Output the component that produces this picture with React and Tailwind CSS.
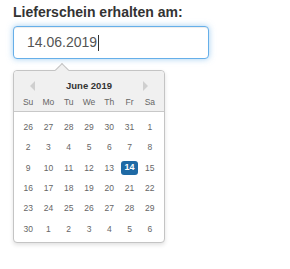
const weekdays = ["Su", "Mo", "Tu", "We", "Th", "Fr", "Sa"];

const weeks = [
  [26, 27, 28, 29, 30, 31, 1],
  [2, 3, 4, 5, 6, 7, 8],
  [9, 10, 11, 12, 13, 14, 15],
  [16, 17, 18, 19, 20, 21, 22],
  [23, 24, 25, 26, 27, 28, 29],
  [30, 1, 2, 3, 4, 5, 6],
];

function DatePicker() {
  return (
    <div className="relative mt-[11px] w-[152px] rounded-[4px] border border-[#c4c4c4] bg-white shadow-[0_2px_4px_rgba(0,0,0,0.12)]">
      {/* caret */}
      <div className="absolute left-[43px] top-[-6px] h-[10px] w-[10px] rotate-45 border-l border-t border-[#c4c4c4] bg-[#f0f0f0]" />

      <div className="relative rounded-t-[4px] border-b border-[#c8c8c8] bg-[#f0f0f0] px-[4px] pt-[6px] pb-[2px]">
        <div className="flex h-[18px] items-center justify-between px-[12px]">
          <span className="h-0 w-0 border-y-[5px] border-r-[5px] border-y-transparent border-r-[#cfcfcf]" />
          <span className="text-[9.5px] font-bold text-[#333]">June 2019</span>
          <span className="h-0 w-0 border-y-[5px] border-l-[5px] border-y-transparent border-l-[#cfcfcf]" />
        </div>
        <div className="grid h-[14px] w-[142px] grid-cols-7 items-center text-center text-[8.5px] text-[#666]">
          {weekdays.map((d) => (
            <span key={d}>{d}</span>
          ))}
        </div>
      </div>

      <div className="px-[4px] pt-[5px] pb-[3px]">
        {weeks.map((week, i) => (
          <div key={i} className="grid h-[20.4px] w-[142px] grid-cols-7 items-center text-center text-[8.5px] text-[#666]">
            {week.map((day, j) =>
              i === 2 && day === 14 ? (
                <span key={j} className="flex justify-center">
                  <span className="flex h-[14px] w-[17px] items-center justify-center rounded-[3px] bg-[#1f6aa5] text-[9px] font-bold text-white">
                    {day}
                  </span>
                </span>
              ) : (
                <span key={j}>{day}</span>
              )
            )}
          </div>
        ))}
      </div>
    </div>
  );
}

export default function App() {
  return (
    <div className="min-h-[269px] bg-white px-[13px] pt-[2px] font-['Liberation_Sans',Arial,sans-serif]">
      <label className="block h-[20px] text-[14px] leading-[20px] font-bold text-[#333]">
        Lieferschein erhalten am:
      </label>
      <div className="mt-[4px] flex h-[33px] w-[196px] items-center rounded-[4px] border border-[#66afe9] bg-white pl-[13px] shadow-[inset_0_1px_1px_rgba(0,0,0,0.075),0_0_6px_rgba(102,175,233,0.6)]">
        <span className="text-[14px] text-[#555]">14.06.2019</span>
        <span className="ml-px h-[16px] w-px bg-[#333]" />
      </div>
      <DatePicker />
    </div>
  );
}
